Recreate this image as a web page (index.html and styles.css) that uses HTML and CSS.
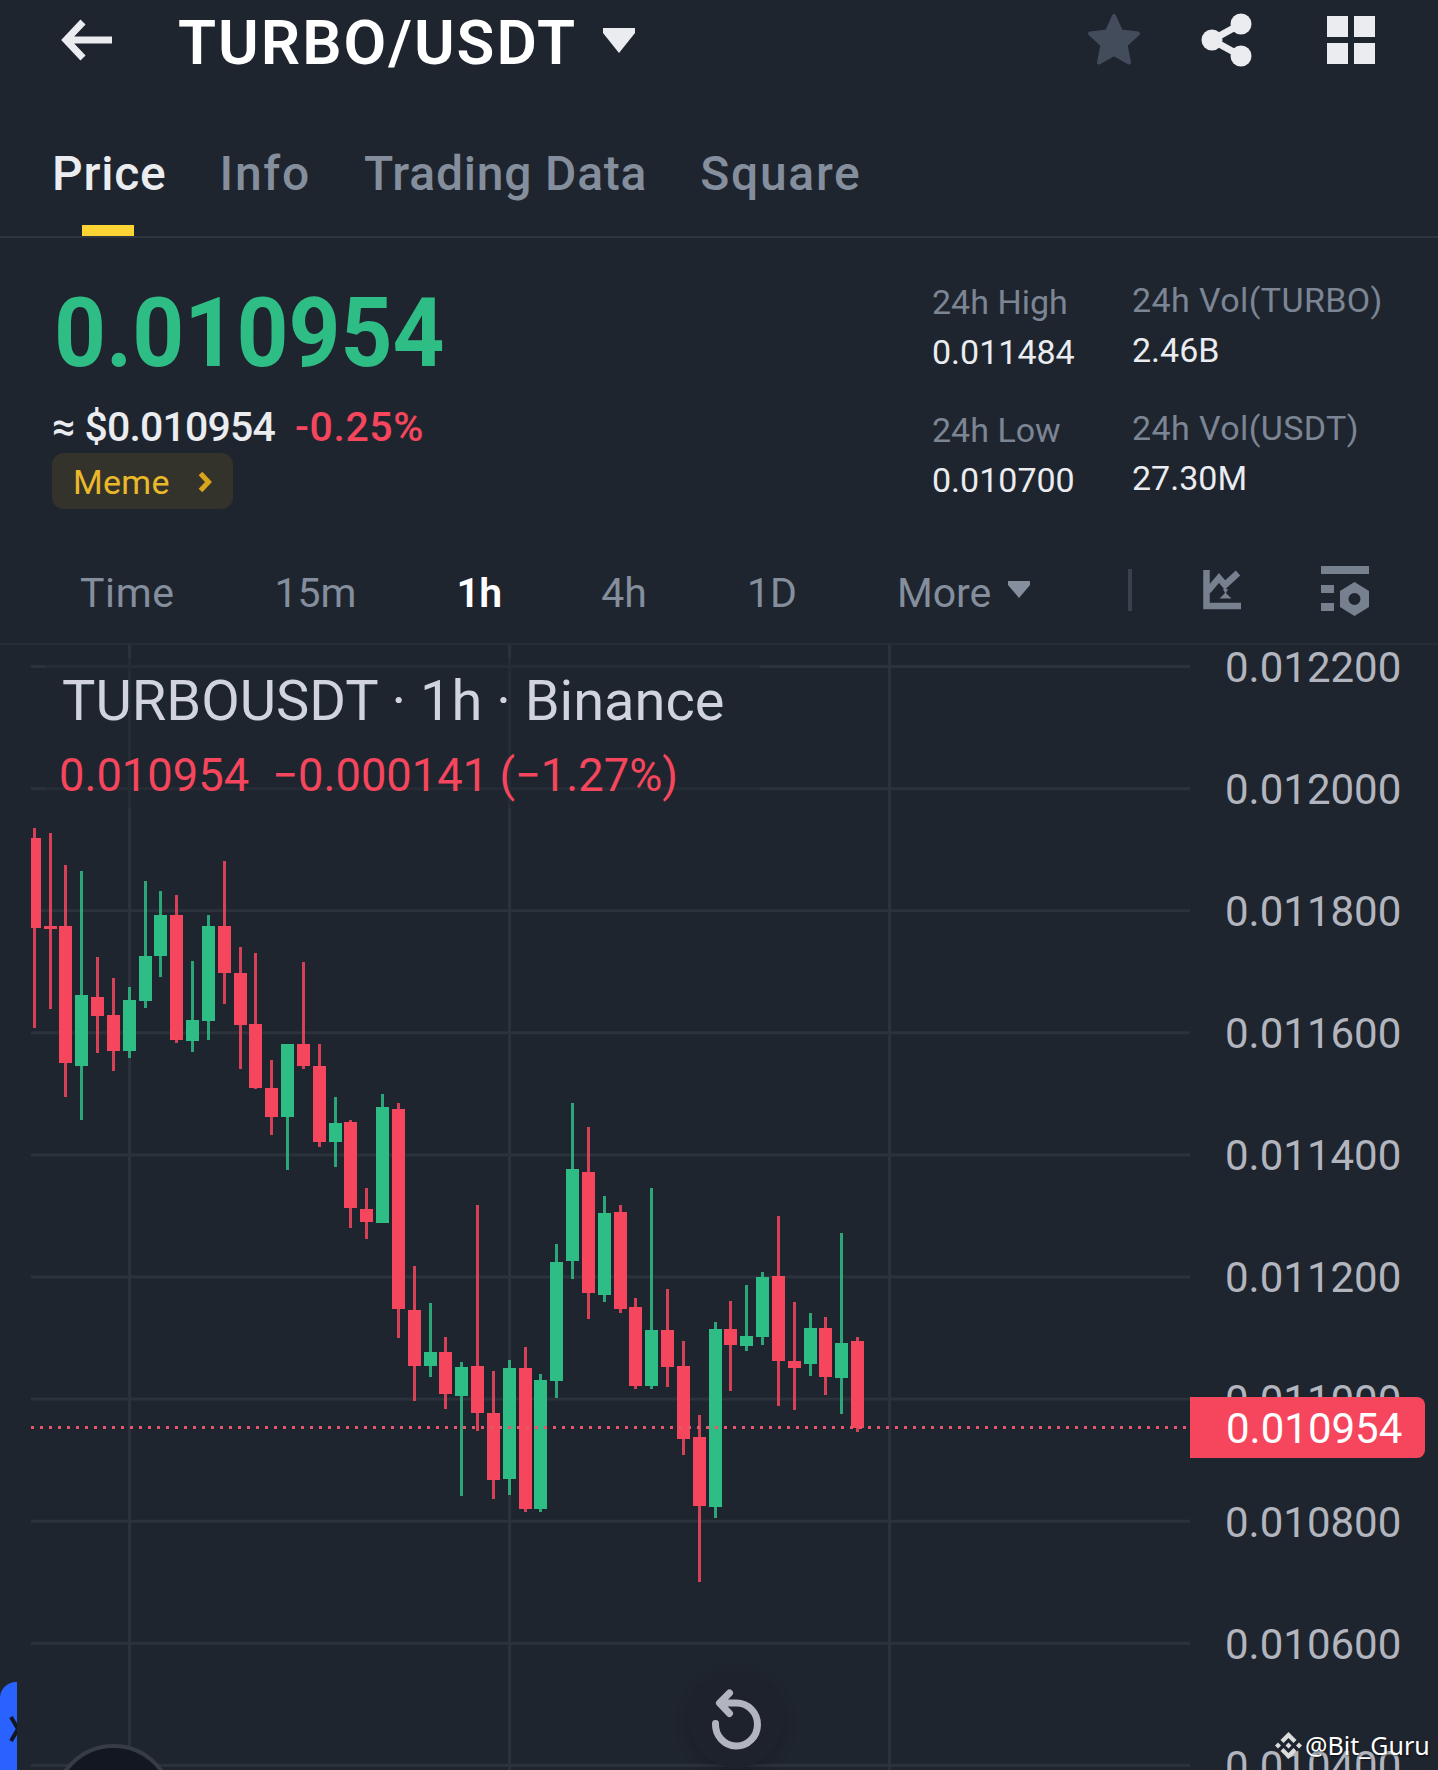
FILE: index.html
```html
<!DOCTYPE html>
<html lang="en">

<head>
    <meta charset="UTF-8">
    <meta name="viewport" content="width=device-width, initial-scale=1.0">
    <title>TURBO/USDT</title>
    <link rel="stylesheet" href="styles.css">
</head>

<body>
    <div class="page">
        <div class="header">
            <svg class="back" width="52" height="42" viewBox="0 0 52 42">
                <path d="M22 3L5 21l17 18M5 21h46" />
            </svg>
            <h1 class="pair">TURBO/USDT</h1>
            <svg class="caret" width="32" height="25" viewBox="0 0 32 25">
                <path d="M0 0h32v5L16 25 0 5z" />
            </svg>
            <div class="header-actions">
                <svg class="star" width="54" height="54" viewBox="0 0 54 54">
                    <path d="M27 3l7 15.500 17 2-12.500 11.500 3.500 17.500L27 41 12 49.500 15.500 32 3 20.500l17-2z" />
                </svg>
                <svg class="share" width="51" height="54" viewBox="0 0 51 54">
                    <path d="M40 11L11 27l29 16" />
                    <circle cx="40" cy="11" r="10.500" />
                    <circle cx="11" cy="27" r="10.500" />
                    <circle cx="40" cy="43" r="10.500" />
                </svg>
                <svg class="apps" width="48" height="48" viewBox="0 0 48 48">
                    <path d="M0 0h21v21H0zM27 0h21v21H27zM0 27h21v21H0zM27 27h21v21H27z" />
                </svg>
            </div>
        </div>

        <div class="tabs">
            <div class="tab active">Price</div>
            <div class="tab wide">Info</div>
            <div class="tab">Trading Data</div>
            <div class="tab wide">Square</div>
        </div>

        <div class="summary">
            <div class="price-box">
                <div class="last-price">0.010954</div>
                <div class="sub-price">
                    <span class="approx">≈</span>
                    <span class="usd">$0.010954</span>
                    <span class="change">-0.25%</span>
                </div>
                <div class="tag">
                    <span>Meme</span>
                    <svg width="14" height="22" viewBox="0 0 14 22">
                        <path d="M2.500 2.500L10.500 11l-8 8.500" />
                    </svg>
                </div>
            </div>
            <div class="stats high-low">
                <div class="label">24h High</div>
                <div class="value">0.011484</div>
                <div class="label">24h Low</div>
                <div class="value">0.010700</div>
            </div>
            <div class="stats volume">
                <div class="label">24h Vol(TURBO)</div>
                <div class="value">2.46B</div>
                <div class="label">24h Vol(USDT)</div>
                <div class="value">27.30M</div>
            </div>
        </div>

        <div class="intervals">
            <span class="time">Time</span>
            <span>15m</span>
            <span class="active">1h</span>
            <span>4h</span>
            <span>1D</span>
            <div class="more">
                <span>More</span>
                <svg class="more-caret" width="22" height="17" viewBox="0 0 22 17">
                    <path d="M0 0h22v4L11 17 0 4z" />
                </svg>
            </div>
            <div class="tools">
                <div class="divider"></div>
                <svg class="indicator" width="38" height="40" viewBox="0 0 38 40">
                    <path class="line" d="M3.500 0v36H38M5 21l11-13 6 7L35 3" />
                    <path d="M20 19h5l-2 4 5.500 5.500H16.500l5.500-5.500z" />
                </svg>
                <svg class="settings" width="48" height="50" viewBox="0 0 48 50">
                    <path d="M0 0h48v8H0zM0 19h13v8H0zM0 37h13v8H0z" />
                    <path fill-rule="evenodd" d="M33.500 16L48 25v16l-14.500 9L19 41V25zM33.500 27a6 6 0 1 0 0 12 6 6 0 0 0 0-12z" />
                </svg>
            </div>
        </div>

        <div class="chart">
            <svg class="plot" id="plot" width="1190" height="1125" viewBox="0 645 1190 1125"></svg>
            <div class="axis">
                <div>0.012200</div>
                <div>0.012000</div>
                <div>0.011800</div>
                <div>0.011600</div>
                <div>0.011400</div>
                <div>0.011200</div>
                <div>0.011000</div>
                <div>0.010800</div>
                <div>0.010600</div>
                <div>0.010400</div>
            </div>
            <div class="legend">
                <div class="legend-title">TURBOUSDT · 1h · Binance</div>
                <div class="legend-values"><span>0.010954</span><span>−0.000141 (−1.27%)</span></div>
            </div>
            <div class="price-tag">0.010954</div>
            <div class="drawer">
                <svg width="17" height="88" viewBox="0 0 17 88">
                    <path d="M11 35l7 12-7 12" />
                </svg>
            </div>
            <div class="logo-circle"></div>
            <div class="reset">
                <svg width="96" height="96" viewBox="0 0 96 96">
                    <path d="M27.500 51.500a21 21.500 0 1 0 21-20.500H33M41.500 21L31.500 31 41.500 41.500" />
                </svg>
            </div>
            <div class="watermark">
                <svg width="27" height="27" viewBox="0 0 27 27">
                    <path d="M13.500 0l8 8-3 3-5-5-5 5-3-3zM13.500 27l-8-8 3-3 5 5 5-5 3 3zM13.500 10.500l3 3-3 3-3-3zM3 10.500l3 3-3 3-3-3zM24 10.500l3 3-3 3-3-3z" />
                </svg>
                <span>@Bit_Guru</span>
            </div>
        </div>
    </div>
    <script src="script.js"></script>
</body>

</html>
```
FILE: styles.css
```css
body {
    margin: 0;
    background-color: #1f252f;
    font-family: Roboto, "Liberation Sans", sans-serif;
    color: #eaecef;
}

.page {
    position: relative;
    width: 1438px;
    height: 1770px;
    overflow: hidden;
}

svg {
    display: block;
    flex: none;
}

.header {
    display: flex;
    align-items: center;
    height: 80px;
    padding: 0 63px 0 61px;
}

.back {
    fill: none;
    stroke: #eaecef;
    stroke-width: 7;
}

.pair {
    margin: 6px 26px 0 65px;
    font-size: 62px;
    line-height: 74px;
    font-weight: 600;
    letter-spacing: 2px;
    color: #fff;
}

.caret {
    fill: #eaecef;
}

.header-actions {
    display: flex;
    align-items: center;
    margin-left: auto;
}

.star {
    fill: #434c5a;
    stroke: #434c5a;
    stroke-width: 4;
    stroke-linejoin: round;
}

.share {
    margin: 0 75px 0 60px;
    fill: #eaecef;
}

.share path {
    fill: none;
    stroke: #eaecef;
    stroke-width: 7;
}

.apps {
    fill: #eaecef;
}

.tabs {
    display: flex;
    gap: 53px;
    padding: 58px 0 0 52px;
    border-bottom: 2px solid #2f363f;
}

.tab {
    position: relative;
    height: 98px;
    font-size: 48px;
    line-height: 72px;
    font-weight: 500;
    letter-spacing: 0.8px;
    color: #848e9c;
}

.tab.wide {
    letter-spacing: 1.7px;
}

.tab.active {
    color: #eaecef;
}

.tab.active::after {
    content: "";
    position: absolute;
    left: 50%;
    bottom: 0;
    width: 52px;
    height: 11px;
    margin-left: -27px;
    background-color: #fcd535;
}

.summary {
    display: flex;
    height: 304px;
    padding-left: 52px;
}

.price-box {
    width: 880px;
    padding-top: 46px;
}

.last-price {
    margin-left: 2px;
    font-size: 97px;
    line-height: 98px;
    font-weight: 700;
    color: #2ebd85;
    transform: scaleX(0.935);
    transform-origin: left;
}

.sub-price {
    display: flex;
    margin-top: 20px;
    font-size: 41px;
    line-height: 50px;
    font-weight: 500;
}

.usd {
    margin: 0 20px 0 9px;
    letter-spacing: -0.8px;
}

.change {
    letter-spacing: 0.6px;
    color: #f6465d;
}

.tag {
    display: flex;
    align-items: center;
    justify-content: space-between;
    box-sizing: border-box;
    width: 181px;
    height: 56px;
    margin-top: 1px;
    padding: 1px 21px 0 21px;
    border-radius: 12px;
    background-color: #34332b;
    font-size: 34px;
    letter-spacing: 0.3px;
    color: #eab92a;
}

.tag svg {
    fill: none;
    stroke: #d9a51c;
    stroke-width: 5;
}

.stats {
    width: 200px;
    padding-top: 39px;
    font-size: 34px;
    line-height: 50px;
    white-space: nowrap;
}

.volume {
    padding-top: 37px;
}

.label {
    color: #7c8594;
}

.volume .label {
    letter-spacing: 0.4px;
}

.value {
    margin-bottom: 28px;
}

.intervals {
    display: flex;
    align-items: center;
    gap: 100px;
    height: 101px;
    padding-left: 80px;
    border-bottom: 2px solid #252c35;
    font-size: 41px;
    color: #848e9c;
}

.intervals .time {
    letter-spacing: 0.6px;
}

.intervals .active {
    font-weight: 600;
    letter-spacing: -0.8px;
    color: #fff;
}

.more {
    display: flex;
    align-items: center;
    gap: 17px;
}

.more-caret {
    margin-bottom: 7px;
    fill: #848e9c;
}

.tools {
    display: flex;
    align-items: center;
    margin-left: -2px;
}

.divider {
    width: 4px;
    height: 42px;
    margin: 0 71px 5px 0;
    background-color: #39414c;
}

.indicator,
.settings {
    fill: #76808f;
}

.indicator {
    margin: 0 80px 6px 0;
}

.settings {
    margin-bottom: 3px;
}

.indicator .line {
    fill: none;
    stroke: #76808f;
    stroke-width: 6.5;
}

.chart {
    position: relative;
    display: flex;
    height: 1125px;
}

.grid-line {
    fill: #2b323b;
}

.up {
    fill: #2ebd85;
}

.down {
    fill: #f6465d;
}

.wick {
    opacity: 0.85;
}

.last-line {
    stroke: #e8566a;
    stroke-width: 3;
    stroke-dasharray: 3 6;
}

.axis {
    padding-left: 35px;
    margin-top: -38px;
    font-size: 42px;
    line-height: 122.1px;
    color: #b2b5be;
}

.legend {
    position: absolute;
    left: 45px;
    top: 13px;
    padding: 0 35px 0 14px;
    background-color: rgba(31, 37, 47, 0.5);
}

.legend-title {
    padding-left: 3px;
    font-size: 56px;
    line-height: 86px;
    color: #d1d4dc;
}

.legend-values {
    display: flex;
    gap: 23px;
    font-size: 45.3px;
    line-height: 64px;
    color: #f6465d;
}

.price-tag {
    position: absolute;
    left: 1190px;
    top: 752px;
    box-sizing: border-box;
    width: 235px;
    height: 61px;
    padding-left: 36px;
    border-radius: 0 8px 8px 0;
    background-color: #f6465d;
    font-size: 42px;
    line-height: 63px;
    color: #fff;
}

.drawer {
    position: absolute;
    left: 0;
    top: 1037px;
    overflow: hidden;
    border-radius: 16px 0 0 0;
    background-color: #2962ff;
}

.drawer path {
    fill: none;
    stroke: #131722;
    stroke-width: 4;
}

.logo-circle {
    position: absolute;
    left: 53px;
    top: 1099px;
    box-sizing: border-box;
    width: 121px;
    height: 121px;
    border: 4px solid #363c45;
    border-radius: 50%;
    background-color: #131722;
}

.reset {
    position: absolute;
    left: 688px;
    top: 1027px;
    border-radius: 50%;
    background-color: #1e222d;
    box-shadow: 0 4px 14px rgba(0, 0, 0, 0.2);
}

.reset path {
    fill: none;
    stroke: #b2b5be;
    stroke-width: 7;
    stroke-linecap: round;
    stroke-linejoin: round;
}

.watermark {
    position: absolute;
    left: 1275px;
    top: 1083px;
    display: flex;
    align-items: center;
    gap: 3px;
    font-family: "Noto Sans", sans-serif;
    font-size: 25px;
    line-height: 34px;
    color: #fff;
    text-shadow: 1px 1px 2px rgba(0, 0, 0, 0.6);
}

.watermark svg {
    fill: #dcdcdc;
}
```
FILE: script.js
```js
// [direction, high, body top, body bottom, low]
const candles = [
    ['down', 828, 838, 928, 1028], ['down', 833, 926, 929, 1009], ['down', 865, 926, 1063, 1097],
    ['up', 871, 995, 1066, 1120], ['down', 957, 997, 1016, 1053], ['down', 978, 1015, 1051, 1071],
    ['up', 987, 1000, 1051, 1058], ['up', 881, 956, 1001, 1008], ['up', 891, 915, 956, 977],
    ['down', 895, 915, 1040, 1043], ['up', 961, 1020, 1041, 1052], ['up', 915, 926, 1021, 1040],
    ['down', 861, 926, 973, 1004], ['down', 947, 973, 1025, 1069], ['down', 953, 1024, 1088, 1089],
    ['down', 1060, 1088, 1117, 1135], ['up', 1044, 1044, 1117, 1170], ['down', 962, 1044, 1066, 1069],
    ['down', 1044, 1066, 1142, 1147], ['up', 1097, 1123, 1142, 1167], ['down', 1120, 1122, 1208, 1228],
    ['down', 1188, 1209, 1222, 1239], ['up', 1094, 1107, 1223, 1223], ['down', 1103, 1109, 1309, 1338],
    ['down', 1266, 1310, 1366, 1401], ['up', 1303, 1352, 1366, 1377], ['down', 1337, 1352, 1394, 1409],
    ['up', 1362, 1367, 1396, 1496], ['down', 1205, 1366, 1413, 1431], ['down', 1371, 1413, 1480, 1499],
    ['up', 1360, 1368, 1479, 1495], ['down', 1347, 1368, 1509, 1512], ['up', 1374, 1380, 1509, 1512],
    ['up', 1244, 1262, 1381, 1398], ['up', 1103, 1169, 1261, 1279], ['down', 1127, 1172, 1293, 1319],
    ['up', 1196, 1213, 1295, 1302], ['down', 1205, 1212, 1309, 1313], ['down', 1298, 1307, 1386, 1389],
    ['up', 1188, 1330, 1386, 1389], ['down', 1289, 1330, 1367, 1387], ['down', 1341, 1366, 1439, 1455],
    ['down', 1415, 1437, 1506, 1582], ['up', 1322, 1329, 1507, 1518], ['down', 1301, 1329, 1345, 1391],
    ['up', 1285, 1336, 1346, 1351], ['up', 1272, 1277, 1337, 1345], ['down', 1216, 1276, 1361, 1406],
    ['down', 1302, 1361, 1368, 1410], ['up', 1313, 1328, 1364, 1376], ['down', 1317, 1328, 1377, 1395],
    ['up', 1233, 1343, 1378, 1414], ['down', 1337, 1341, 1428, 1432]
];

const plot = document.getElementById('plot');

function rect(x, y, width, height, className) {
    const left = Math.max(x, 31);
    return `<rect class="${className}" x="${left}" y="${y}" width="${x + width - left}" height="${height}" />`;
}

let shapes = '';

[128, 508, 888].forEach(x => {
    shapes += rect(x, 645, 3, 1125, 'grid-line');
});

for (let i = 0; i < 10; i++) {
    shapes += rect(31, 665 + i * 122.1, 1159, 3, 'grid-line');
}

candles.forEach(([direction, high, top, bottom, low], i) => {
    const center = 34 + 16 * i - Math.floor((i + 4) / 6);
    shapes += rect(center - 1, high, 3, low - high, `wick ${direction}`);
    shapes += rect(center - 6, top, 13, bottom - top, direction);
});

shapes += '<line class="last-line" x1="31" y1="1427.5" x2="1190" y2="1427.5" />';

plot.innerHTML = shapes;
```
